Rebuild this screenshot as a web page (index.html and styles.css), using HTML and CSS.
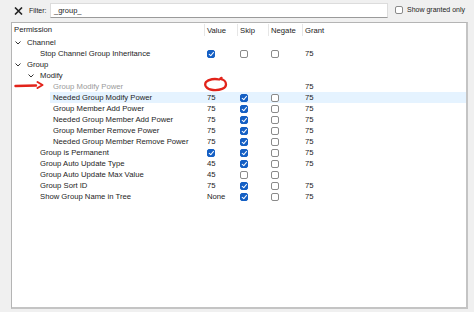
FILE: index.html
```html
<!DOCTYPE html>
<html>
<head>
<meta charset="utf-8">
<link rel="stylesheet" href="styles.css">
</head>
<body>
<div class="toolbar">
  <svg class="close" width="9" height="8" viewBox="0 0 9 8"><path d="M1 0.5 L8 7.5 M8 0.5 L1 7.5" stroke="#222" stroke-width="1.6"/></svg>
  <span class="flabel">Filter:</span>
  <div class="input">_group_</div>
  <label class="granted"><span class="cb"></span><span>Show granted only</span></label>
</div>
<div class="panel">
  <div class="header">
    <div class="hperm">Permission</div>
    <div class="hcol c-val">Value</div>
    <div class="hcol c-skip">Skip</div>
    <div class="hcol c-neg">Negate</div>
    <div class="hcol c-grant">Grant</div>
  </div>

  <div class="row">
    <div class="sp l0"><svg class="chev" width="6" height="4" viewBox="0 0 6 4"><path d="M0.5 0.5 L3 3 L5.5 0.5" fill="none" stroke="#333" stroke-width="1"/></svg></div>
    <div class="body"><div class="label">Channel</div></div>
  </div>
  <div class="row">
    <div class="sp l1"></div>
    <div class="body"><div class="label">Stop Channel Group Inheritance</div><div class="col c-val"><span class="cb on"></span></div><div class="col c-skip"><span class="cb"></span></div><div class="col c-neg"><span class="cb"></span></div><div class="col c-grant">75</div></div>
  </div>
  <div class="row">
    <div class="sp l0"><svg class="chev" width="6" height="4" viewBox="0 0 6 4"><path d="M0.5 0.5 L3 3 L5.5 0.5" fill="none" stroke="#333" stroke-width="1"/></svg></div>
    <div class="body"><div class="label">Group</div></div>
  </div>
  <div class="row">
    <div class="sp l1"><svg class="chev" width="6" height="4" viewBox="0 0 6 4"><path d="M0.5 0.5 L3 3 L5.5 0.5" fill="none" stroke="#333" stroke-width="1"/></svg></div>
    <div class="body"><div class="label">Modify</div></div>
  </div>
  <div class="row">
    <div class="sp l2"></div>
    <div class="body"><div class="label dim">Group Modify Power</div><div class="col c-val"></div><div class="col c-skip"></div><div class="col c-neg"></div><div class="col c-grant">75</div></div>
  </div>
  <div class="row">
    <div class="sp l2"></div>
    <div class="body sel"><div class="label">Needed Group Modify Power</div><div class="col c-val">75</div><div class="col c-skip"><span class="cb on"></span></div><div class="col c-neg"><span class="cb"></span></div><div class="col c-grant">75</div></div>
  </div>
  <div class="row">
    <div class="sp l2"></div>
    <div class="body"><div class="label">Group Member Add Power</div><div class="col c-val">75</div><div class="col c-skip"><span class="cb on"></span></div><div class="col c-neg"><span class="cb"></span></div><div class="col c-grant">75</div></div>
  </div>
  <div class="row">
    <div class="sp l2"></div>
    <div class="body"><div class="label">Needed Group Member Add Power</div><div class="col c-val">75</div><div class="col c-skip"><span class="cb on"></span></div><div class="col c-neg"><span class="cb"></span></div><div class="col c-grant">75</div></div>
  </div>
  <div class="row">
    <div class="sp l2"></div>
    <div class="body"><div class="label">Group Member Remove Power</div><div class="col c-val">75</div><div class="col c-skip"><span class="cb on"></span></div><div class="col c-neg"><span class="cb"></span></div><div class="col c-grant">75</div></div>
  </div>
  <div class="row">
    <div class="sp l2"></div>
    <div class="body"><div class="label">Needed Group Member Remove Power</div><div class="col c-val">75</div><div class="col c-skip"><span class="cb on"></span></div><div class="col c-neg"><span class="cb"></span></div><div class="col c-grant">75</div></div>
  </div>
  <div class="row">
    <div class="sp l1"></div>
    <div class="body"><div class="label">Group is Permanent</div><div class="col c-val"><span class="cb on"></span></div><div class="col c-skip"><span class="cb on"></span></div><div class="col c-neg"><span class="cb"></span></div><div class="col c-grant">75</div></div>
  </div>
  <div class="row">
    <div class="sp l1"></div>
    <div class="body"><div class="label">Group Auto Update Type</div><div class="col c-val">45</div><div class="col c-skip"><span class="cb on"></span></div><div class="col c-neg"><span class="cb"></span></div><div class="col c-grant">75</div></div>
  </div>
  <div class="row">
    <div class="sp l1"></div>
    <div class="body"><div class="label">Group Auto Update Max Value</div><div class="col c-val">45</div><div class="col c-skip"><span class="cb"></span></div><div class="col c-neg"><span class="cb"></span></div><div class="col c-grant"></div></div>
  </div>
  <div class="row">
    <div class="sp l1"></div>
    <div class="body"><div class="label">Group Sort ID</div><div class="col c-val">75</div><div class="col c-skip"><span class="cb on"></span></div><div class="col c-neg"><span class="cb"></span></div><div class="col c-grant">75</div></div>
  </div>
  <div class="row">
    <div class="sp l1"></div>
    <div class="body"><div class="label">Show Group Name in Tree</div><div class="col c-val">None</div><div class="col c-skip"><span class="cb on"></span></div><div class="col c-neg"><span class="cb"></span></div><div class="col c-grant">75</div></div>
  </div>
</div>

<svg class="annot-arrow" width="32" height="10" viewBox="0 0 32 10"><path d="M1.5 6 L22 5.5" stroke="#e2231a" stroke-width="2.4" fill="none" stroke-linecap="round"/><path d="M23.5 2 L28.5 5 L23.5 8" stroke="#e2231a" stroke-width="2" fill="none" stroke-linecap="round" stroke-linejoin="round"/></svg>
<svg class="annot-circle" width="26" height="17" viewBox="0 0 26 17"><path d="M16 3.5 C12 2.5 5.5 3 3 6 C1 9 3 13.5 10 14 C17 14.5 23 12.5 23 8.5 C23 5.5 20.5 3.5 18 3.2 C17 3 17 2.2 18.5 1.8" fill="none" stroke="#e2231a" stroke-width="2.3" stroke-linecap="round"/></svg>
</body>
</html>
```

FILE: styles.css
```css
html, body {
  margin: 0;
  padding: 0;
}
body {
  width: 474px;
  height: 312px;
  background: #f0f0f0;
  font-family: "Liberation Sans", Arial, sans-serif;
  font-size: 7.7px;
  color: #1c1c1c;
  position: relative;
  overflow: hidden;
}
.toolbar {
  height: 22px;
  display: flex;
  align-items: center;
  padding-left: 14px;
  box-sizing: border-box;
}
.close {
  display: block;
  margin-right: 6px;
  margin-top: -1px;
}
.flabel {
  font-size: 7px;
  width: 21px;
  margin-top: -1px;
}
.input {
  width: 338px;
  height: 15px;
  box-sizing: border-box;
  background: #fff;
  border: 1px solid #dcdcdc;
  border-bottom-color: #9a9a9a;
  padding-left: 3px;
  line-height: 13px;
  font-size: 7.5px;
  margin-top: -2px;
}
.granted {
  display: flex;
  align-items: center;
  margin-left: 7px;
  font-size: 7px;
  color: #222;
  margin-top: -3px;
}
.granted .cb {
  margin-right: 4px;
}
.panel {
  margin-left: 11px;
  width: 457px;
  height: 287px;
  box-sizing: border-box;
  background: #fff;
  border: 1px solid #b4b4b4;
  border-right: 2px solid #c4c4c4;
  border-bottom: 2px solid #c4c4c4;
}
.header {
  display: flex;
  height: 14px;
  align-items: stretch;
}
.hperm {
  width: 192px;
  padding-left: 2px;
  box-sizing: border-box;
  line-height: 14px;
}
.hcol {
  border-left: 1px solid #e6e6e6;
  padding-left: 2px;
  box-sizing: border-box;
  line-height: 14px;
  margin: 1px 0;
}
.c-val { width: 33px; }
.c-skip { width: 31px; }
.c-neg { width: 34px; }
.c-grant { width: 164px; flex: none; }
.row {
  display: flex;
  height: 11px;
}
.sp {
  display: flex;
  justify-content: flex-end;
  align-items: center;
  flex: none;
  box-sizing: border-box;
  padding-right: 3px;
}
.l0 { width: 12px; }
.l1 { width: 25px; }
.l2 { width: 38px; }
.chev { display: block; }
.body {
  flex: 1;
  display: flex;
  align-items: center;
  padding-left: 3px;
  line-height: 11px;
}
.body.sel {
  background: #e5f3ff;
}
.label {
  flex: 1;
  white-space: nowrap;
}
.label.dim {
  color: #9a9a9a;
}
.col {
  flex: none;
  display: flex;
  align-items: center;
  padding-left: 3px;
  box-sizing: border-box;
}
.cb {
  display: inline-block;
  width: 8px;
  height: 8px;
  box-sizing: border-box;
  border: 1px solid #8a8a8a;
  border-radius: 2px;
  background: #fff;
  position: relative;
}
.cb.on {
  background: #145fc4;
  border-color: #145fc4;
}
.cb.on::after {
  content: "";
  position: absolute;
  left: 1.5px;
  top: 0.5px;
  width: 2px;
  height: 3.5px;
  border-right: 1px solid #fff;
  border-bottom: 1px solid #fff;
  transform: rotate(40deg);
}
.annot-arrow {
  position: absolute;
  left: 14px;
  top: 80px;
}
.annot-circle {
  position: absolute;
  left: 203px;
  top: 76px;
}
```
